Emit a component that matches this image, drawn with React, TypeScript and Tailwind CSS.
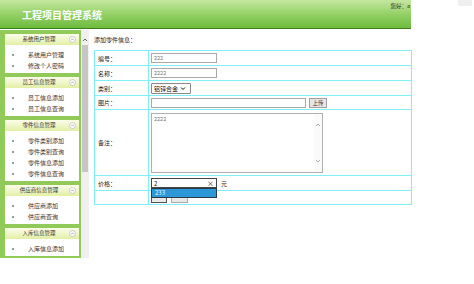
import React from "react";

const sections = [
  { title: "系统用户管理", items: ["系统用户管理", "修改个人密码"] },
  { title: "员工信息管理", items: ["员工信息添加", "员工信息查询"] },
  { title: "零件信息管理", items: ["零件类别添加", "零件类别查询", "零件信息添加", "零件信息查询"] },
  { title: "供应商信息管理", items: ["供应商添加", "供应商查询"] },
  { title: "入库信息管理", items: ["入库信息添加"] },
];

function CircleUp() {
  return (
    <svg width="7" height="7" viewBox="0 0 7 7" className="absolute right-[3px] top-[2px]">
      <circle cx="3.5" cy="3.5" r="3" fill="#fff" stroke="#b0b0b0" strokeWidth="0.6" />
      <path d="M2.2 4.2 L3.5 2.8 L4.8 4.2" fill="none" stroke="#888" strokeWidth="0.7" />
    </svg>
  );
}

function Row({ label, h, border = true, children }: { label: string; h: string; border?: boolean; children?: React.ReactNode }) {
  return (
    <div className={`flex ${h} ${border ? "border-t border-[#80eef6]" : ""}`}>
      <div className="w-[54px] shrink-0 border-r border-[#80eef6] pl-[3px] flex items-center text-[6px] text-[#222]">{label}</div>
      <div className="flex-1 pl-[2px] flex items-center relative">{children}</div>
    </div>
  );
}

export default function App() {
  return (
    <div className="w-[474px] h-[284px] bg-white relative overflow-hidden font-['Noto_Sans_CJK_SC',sans-serif]">
      {/* header */}
      <div className="w-[411px] h-[29px] bg-gradient-to-b from-[#c4e6a0] via-[#95d166] to-[#6dbb3c] border-b border-[#3f7d1e] relative flex items-center">
        <div className="pl-[22px] text-white font-bold text-[10px] leading-[12px] mt-[2px]">
          工程项目管理系统
        </div>
        <div className="absolute right-[1px] top-[3px] text-[5.5px] leading-[7px] text-[#222]">您好：a</div>
      </div>
      <div className="absolute left-[458px] top-0 w-[14px] h-[6px] bg-[#efefef]" />

      <div className="flex mt-[1px]">
        {/* sidebar */}
        <div className="w-[81px] h-[228px] bg-[#92ca5a] pl-[5px] pr-[2px] pt-[4px] flex flex-col gap-[4px] overflow-hidden">
          {sections.map((s) => (
            <div key={s.title} className="bg-white shrink-0">
              <div className="h-[11px] relative flex items-center justify-center pr-[6px] bg-gradient-to-b from-[#fcfdea] to-[#e3efa4] text-[5.5px] text-[#333]">
                {s.title}
                <CircleUp />
              </div>
              <div className="pt-[4px] pb-[2px]">
                {s.items.map((it) => (
                  <div key={it} className="h-[11px] flex items-center pl-[7px] text-[6px] text-[#333]">
                    <span className="w-[2px] h-[2px] bg-[#8d9aa8] shrink-0" />
                    <span className="ml-[14px]">{it}</span>
                  </div>
                ))}
              </div>
            </div>
          ))}
        </div>

        {/* scrollbar */}
        <div className="w-[8px] h-[228px] bg-[#f0f0f0] relative">
          <svg width="8" height="6" viewBox="0 0 8 6" className="absolute left-0 top-[7px]">
            <path d="M2 4 L4 2 L6 4" fill="none" stroke="#555" strokeWidth="0.9" />
          </svg>
          <div className="absolute left-[1px] top-[15px] w-[6px] h-[127px] bg-[#c6c6c6]" />
        </div>

        {/* content */}
        <div className="flex-1 pl-[5px] pt-[6px]">
          <div className="h-[8px] text-[6px] leading-[8px] text-[#222]">添加零件信息：</div>
          <div className="mt-[6px] w-[318px] border border-[#80eef6]">
            <Row label="编号：" h="h-[14px]" border={false}>
              <div className="w-[66px] h-[10px] border border-[#a9a9a9] text-[5.5px] leading-[8px] pl-[2px] text-[#777]">222</div>
            </Row>
            <Row label="名称：" h="h-[15px]">
              <div className="w-[66px] h-[10px] border border-[#a9a9a9] text-[5.5px] leading-[8px] pl-[2px] text-[#777]">2222</div>
            </Row>
            <Row label="类别：" h="h-[15px]">
              <div className="w-[40px] h-[11px] border border-[#8a8a8a] rounded-[1px] flex items-center pl-[2px] text-[6px] text-[#111]">
                铝锌合金
                <svg width="6" height="5" viewBox="0 0 6 5" className="ml-[2px]">
                  <path d="M1 1.5 L3 3.5 L5 1.5" fill="none" stroke="#111" strokeWidth="1" />
                </svg>
              </div>
            </Row>
            <Row label="图片：" h="h-[14px]">
              <div className="w-[155px] h-[10px] border border-[#a9a9a9]" />
              <div className="ml-[3px] w-[18px] h-[10px] border border-[#a0a0a0] bg-[#e6e6e6] text-[5.5px] leading-[8px] text-center text-[#333]">上传</div>
            </Row>
            <Row label="备注：" h="h-[66px]">
              <div className="w-[172px] h-[60px] border border-[#b0b0b0] relative">
                <div className="text-[5.5px] leading-[7px] text-[#777] pl-[2px] pt-[2px]">2222</div>
                <div className="absolute right-0 top-0 w-[8px] h-full bg-[#fafafa]">
                  <svg width="8" height="6" viewBox="0 0 8 6" className="absolute left-0 top-[8px]">
                    <path d="M2 4 L4 2 L6 4" fill="none" stroke="#999" strokeWidth="0.8" />
                  </svg>
                  <svg width="8" height="6" viewBox="0 0 8 6" className="absolute left-0 bottom-[8px]">
                    <path d="M2 2 L4 4 L6 2" fill="none" stroke="#999" strokeWidth="0.8" />
                  </svg>
                </div>
              </div>
            </Row>
            <Row label="价格：" h="h-[15px]">
              <div className="w-[66px] h-[10px] border border-[#444] flex items-center justify-between px-[2px] text-[6px] text-[#111]">
                <span>2</span>
                <span className="text-[7px] leading-[8px]">×</span>
              </div>
              <span className="ml-[4px] text-[6px] text-[#222]">元</span>
              <div className="absolute left-[2px] top-[12px] w-[66px] h-[10px] bg-[#2d98d8] border border-[#2a3a48] z-10 text-[6px] leading-[8px] pl-[3px] text-[#e6f6ff]">
                233
              </div>
            </Row>
            <Row label="" h="h-[14px]">
              <div className="mt-[2px] w-[16px] h-[9px] border border-[#555] bg-[#e8e8e8]" />
              <div className="mt-[2px] ml-[4px] w-[17px] h-[9px] border border-[#aaa] bg-[#e8e8e8]" />
            </Row>
          </div>
        </div>
      </div>
    </div>
  );
}
